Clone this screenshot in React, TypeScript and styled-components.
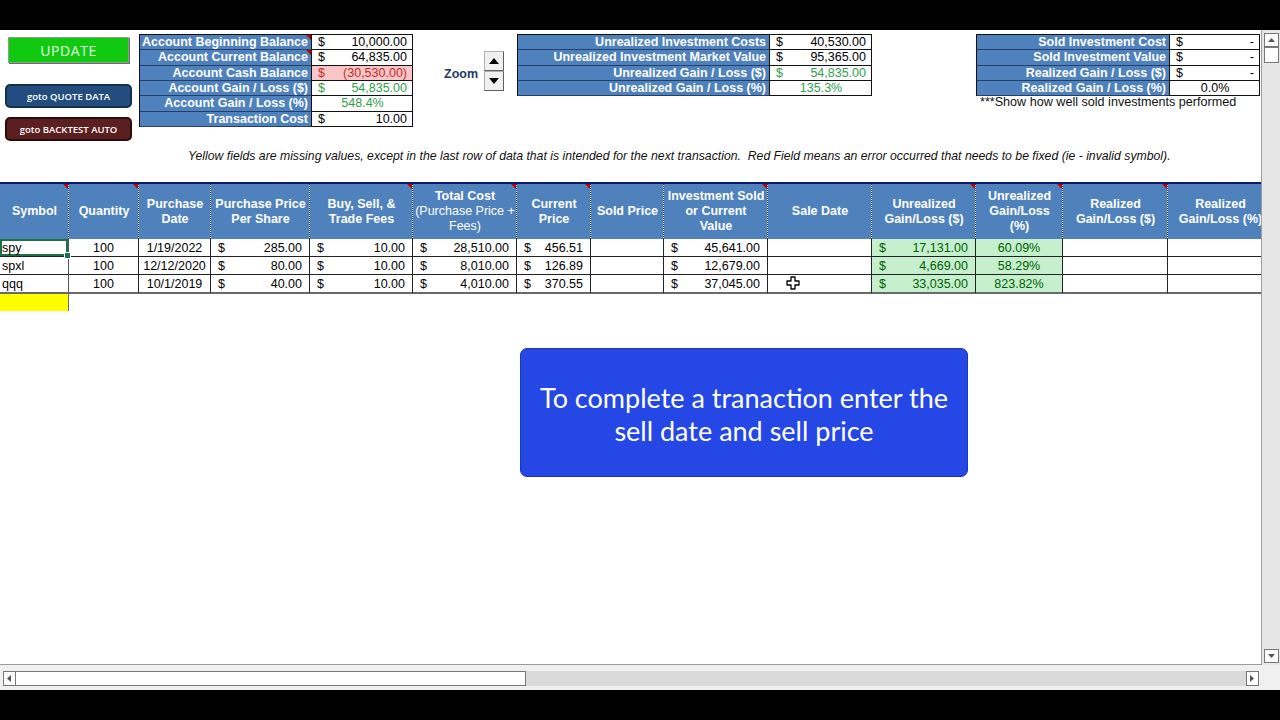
import React from "react";
import styled, { createGlobalStyle } from "styled-components";

const GlobalStyle = createGlobalStyle`
  html, body { margin: 0; padding: 0; background: #000; }
  body {
    width: 1280px;
    height: 720px;
    overflow: hidden;
    font-family: "Liberation Sans", Arial, sans-serif;
  }
  * { box-sizing: border-box; }
`;

// Excel column widths (A..N), px — N runs past the window edge
const COLS = "69px 70px 72px 99px 103px 104px 74px 73px 104px 104px 104px 87px 105px 105px";

const Screen = styled.div`
  width: 1280px;
  height: 720px;
  display: flex;
  flex-direction: column;
  background: #000;
`;

const BlackBar = styled.div<{ $h: number }>`
  height: ${(p) => p.$h}px;
  background: #000;
  flex-shrink: 0;
`;

const Window = styled.div`
  height: 635px;
  display: flex;
  background: #fff;
`;

const Sheet = styled.div`
  position: relative;
  width: 1262px;
  height: 635px;
  overflow: hidden;
  background: #fff;
  border-right: 1px solid #9c9c9c;
  border-bottom: 1px solid #9c9c9c;
  display: flex;
  flex-direction: column;
`;

/* ---------- top area ---------- */

const TopArea = styled.div`
  display: grid;
  grid-template-columns: ${COLS};
  height: 111px;
  padding-top: 4px;
  align-items: start;
`;

const ButtonStack = styled.div`
  grid-column: 1 / 3;
  display: flex;
  flex-direction: column;
  align-items: flex-start;
  padding: 3px 0 0 5px;
`;

const UpdateButton = styled.div`
  margin-left: 3px;
  width: 121px;
  height: 26px;
  background: #12c912;
  border: 1px solid #8aa08a;
  box-shadow: 1px 1px 0 #6b6b6b;
  color: #e4ffe4;
  font-family: "Open Sans", sans-serif;
  font-size: 14px;
  letter-spacing: 0.6px;
  display: flex;
  align-items: center;
  justify-content: center;
`;

const NavButton = styled.div<{ $bg: string; $edge: string; $gap: number }>`
  margin-top: ${(p) => p.$gap}px;
  width: 127px;
  height: 24px;
  border-radius: 5px;
  background: ${(p) => p.$bg};
  border: 2px solid ${(p) => p.$edge};
  color: #fff;
  font-family: "Open Sans", sans-serif;
  font-weight: 600;
  font-size: 9.5px;
  display: flex;
  align-items: center;
  justify-content: center;
`;

const SummaryTable = styled.div<{ $col?: string; $label: number }>`
  grid-column: ${(p) => p.$col || "auto"};
  display: grid;
  grid-template-columns: ${(p) => p.$label}px 1fr;
  border: 1px solid #111;
  border-bottom: none;
`;

const LabelCell = styled.div<{ $flag?: boolean }>`
  position: relative;
  height: 15.33px;
  background: #4f81bd;
  color: #fff;
  font-weight: bold;
  font-size: 12.5px;
  line-height: 14.5px;
  text-align: right;
  padding-right: 3px;
  white-space: nowrap;
  border-bottom: 1px solid #22406a;
  &::after {
    content: "";
    display: ${(p) => (p.$flag ? "block" : "none")};
    position: absolute;
    top: 0;
    right: 0;
    border-top: 5px solid #c00000;
    border-left: 5px solid transparent;
  }
`;

const ValueCell = styled.div<{ $bg?: string; $color?: string; $center?: boolean }>`
  height: 15.33px;
  display: flex;
  justify-content: ${(p) => (p.$center ? "center" : "space-between")};
  align-items: center;
  padding: 0 5px 0 6px;
  background: ${(p) => p.$bg || "#fff"};
  color: ${(p) => p.$color || "#000"};
  font-size: 12.5px;
  border-bottom: 1px solid #111;
  border-left: 1px solid #111;
  white-space: nowrap;
`;

const ZoomControl = styled.div`
  grid-column: 6;
  display: flex;
  align-items: center;
  gap: 6px;
  padding-left: 31px;
  margin-top: 17px;
`;

const ZoomLabel = styled.span`
  font-weight: bold;
  font-size: 12.5px;
  color: #1f3a68;
  padding-top: 5px;
`;

const Spinner = styled.div`
  display: flex;
  flex-direction: column;
`;

const SpinButton = styled.div`
  width: 20px;
  height: 20px;
  background: #f0f0f0;
  border: 1px solid #b0b0b0;
  border-right-color: #606060;
  border-bottom-color: #606060;
  display: flex;
  align-items: center;
  justify-content: center;
`;

const SoldBlock = styled.div`
  grid-column: 12 / 15;
  width: 284px;
`;

const Footnote = styled.div`
  padding-left: 4px;
  font-size: 12.6px;
  line-height: 13px;
  color: #111;
  white-space: nowrap;
`;

const NoteRow = styled.div`
  height: 41px;
  padding: 8px 0 0 188px;
  font-style: italic;
  font-size: 12.25px;
  line-height: 14px;
  color: #111;
  white-space: nowrap;
`;

/* ---------- main table ---------- */

const HeaderRow = styled.div`
  display: grid;
  grid-template-columns: ${COLS};
  height: 57px;
  border-top: 2px solid #0c1a6e;
  background: #4f81bd;
`;

const HeadCell = styled.div<{ $flag?: boolean }>`
  position: relative;
  display: flex;
  flex-direction: column;
  align-items: center;
  justify-content: center;
  text-align: center;
  color: #fff;
  font-weight: bold;
  font-size: 12.5px;
  line-height: 15px;
  white-space: nowrap;
  &::after {
    content: "";
    position: absolute;
    top: 0;
    bottom: 0;
    right: 0;
    width: 1px;
    background: repeating-linear-gradient(#14246a 0 1px, #ffffff 1px 2px);
  }
  &::before {
    content: "";
    display: ${(p) => (p.$flag ? "block" : "none")};
    position: absolute;
    top: 0;
    right: 1px;
    border-top: 5px solid #c00000;
    border-left: 5px solid transparent;
  }
`;

const SubNote = styled.span`
  font-weight: normal;
`;

const DataRow = styled.div<{ $last?: boolean }>`
  display: grid;
  grid-template-columns: ${COLS};
  height: ${(p) => (p.$last ? 19 : 18)}px;
`;

const DataCell = styled.div<{
  $bg?: string;
  $color?: string;
  $align?: string;
  $last?: boolean;
  $active?: boolean;
}>`
  position: relative;
  display: flex;
  align-items: center;
  justify-content: ${(p) => p.$align || "space-between"};
  padding: 0 7px;
  background: ${(p) => p.$bg || "#fff"};
  color: ${(p) => p.$color || "#000"};
  font-size: 12.5px;
  white-space: nowrap;
  border-right: 1px solid #222;
  border-bottom: ${(p) => (p.$last ? "2px solid #6a6a6a" : "1px solid #222")};
  z-index: ${(p) => (p.$active ? 2 : 1)};
  box-shadow: ${(p) => (p.$active ? "inset 0 0 0 2px #1e7145" : "none")};
  &::after {
    content: "";
    display: ${(p) => (p.$active ? "block" : "none")};
    position: absolute;
    right: -3px;
    bottom: -3px;
    width: 5px;
    height: 5px;
    background: #1e7145;
    border: 1px solid #fff;
  }
`;

const SymbolCell = styled(DataCell)`
  padding: 0 2px;
  border-right-color: #555;
`;

const YellowRow = styled.div`
  display: grid;
  grid-template-columns: ${COLS};
  height: 17px;
`;

const YellowCell = styled.div`
  background: #ffff00;
  border-right: 1px solid #6a6a6a;
`;

/* ---------- overlays ---------- */

const Callout = styled.div`
  position: absolute;
  left: 520px;
  top: 318px;
  width: 448px;
  height: 129px;
  background: #2447e6;
  border: 1px solid #1b35b8;
  border-radius: 7px;
  color: #fff;
  font-family: Lato, "Open Sans", sans-serif;
  font-size: 27px;
  line-height: 33px;
  text-align: center;
  display: flex;
  align-items: center;
  justify-content: center;
  padding-top: 2px;
`;

const Cursor = styled.svg`
  position: absolute;
  left: 786px;
  top: 246px;
  z-index: 5;
`;

/* ---------- scrollbars ---------- */

const VScroll = styled.div`
  width: 18px;
  height: 635px;
  background: #e6e6e6;
  display: flex;
  flex-direction: column;
  padding: 3px 1px 2px 2px;
`;

const ScrollBtn = styled.div<{ $w?: number; $h?: number }>`
  width: ${(p) => p.$w || 15}px;
  height: ${(p) => p.$h || 15}px;
  background: #fff;
  border: 1px solid #777;
  display: flex;
  align-items: center;
  justify-content: center;
  flex-shrink: 0;
`;

const VSpacer = styled.div`
  flex: 1;
`;

const HBar = styled.div`
  height: 25px;
  background: #f0f0f0;
  display: flex;
  align-items: center;
  padding: 1px 0 0 3px;
`;

const HThumb = styled.div`
  width: 510px;
  height: 15px;
  background: #fff;
  border: 1px solid #777;
  border-left: none;
`;

const HTrack = styled.div`
  width: 720px;
  height: 15px;
  background: #dadada;
`;

const Arrow = ({ dir }: { dir: "up" | "down" | "left" | "right" }) => {
  const pts = {
    up: "1,6 4.5,2 8,6",
    down: "1,2 4.5,6 8,2",
    left: "6,1 2,4.5 6,8",
    right: "2,1 6,4.5 2,8",
  }[dir];
  return (
    <svg width="9" height="9" viewBox="0 0 9 9">
      <polygon points={pts} fill="#555" />
    </svg>
  );
};

const SpinArrow = ({ up }: { up?: boolean }) => (
  <svg width="12" height="8" viewBox="0 0 12 8">
    <polygon points={up ? "1,7 6,1 11,7" : "1,1 6,7 11,1"} fill="#000" />
  </svg>
);

const Money = ({ v }: { v: string }) => (
  <>
    <span>$</span>
    <span>{v}</span>
  </>
);

const accountRows = [
  { label: "Account Beginning Balance", value: "10,000.00", flag: true },
  { label: "Account Current Balance", value: "64,835.00", flag: true },
  { label: "Account Cash Balance", value: "(30,530.00)", bg: "#f8c6c6", color: "#c42b2b" },
  { label: "Account Gain / Loss ($)", value: "54,835.00", color: "#2fa04c" },
  { label: "Account Gain / Loss (%)", value: "548.4%", color: "#2fa04c", pct: true },
  { label: "Transaction Cost", value: "10.00" },
];

const unrealizedRows = [
  { label: "Unrealized Investment Costs", value: "40,530.00" },
  { label: "Unrealized Investment Market Value", value: "95,365.00" },
  { label: "Unrealized Gain / Loss ($)", value: "54,835.00", color: "#2fa04c" },
  { label: "Unrealized Gain / Loss (%)", value: "135.3%", color: "#2fa04c", pct: true },
];

const soldRows = [
  { label: "Sold Investment Cost", value: "-" },
  { label: "Sold Investment Value", value: "-" },
  { label: "Realized Gain / Loss ($)", value: "-" },
  { label: "Realized Gain / Loss (%)", value: "0.0%", pct: true },
];

type SumRow = { label: string; value: string; flag?: boolean; bg?: string; color?: string; pct?: boolean };

const SummaryRows = ({ rows }: { rows: SumRow[] }) => (
  <>
    {rows.map((r) => (
      <React.Fragment key={r.label}>
        <LabelCell $flag={r.flag}>{r.label}</LabelCell>
        <ValueCell $bg={r.bg} $color={r.color} $center={r.pct}>
          {r.pct ? r.value : <Money v={r.value} />}
        </ValueCell>
      </React.Fragment>
    ))}
  </>
);

const headers: { lines: React.ReactNode; flag?: boolean }[] = [
  { lines: "Symbol", flag: true },
  { lines: "Quantity", flag: true },
  { lines: <>Purchase<br />Date</> },
  { lines: <>Purchase Price<br />Per Share</> },
  { lines: <>Buy, Sell, &amp;<br />Trade Fees</>, flag: true },
  {
    lines: (
      <>
        Total Cost
        <br />
        <SubNote>(Purchase Price +</SubNote>
        <SubNote>Fees)</SubNote>
      </>
    ),
    flag: true,
  },
  { lines: <>Current<br />Price</>, flag: true },
  { lines: "Sold Price" },
  { lines: <>Investment Sold<br />or Current<br />Value</>, flag: true },
  { lines: "Sale Date" },
  { lines: <>Unrealized<br />Gain/Loss ($)</>, flag: true },
  { lines: <>Unrealized<br />Gain/Loss<br />(%)</>, flag: true },
  { lines: <>Realized<br />Gain/Loss ($)</>, flag: true },
  { lines: <>Realized<br />Gain/Loss (%)</> },
];

const trades = [
  { sym: "spy", qty: "100", date: "1/19/2022", price: "285.00", fee: "10.00", total: "28,510.00", cur: "456.51", val: "45,641.00", ug: "17,131.00", up: "60.09%" },
  { sym: "spxl", qty: "100", date: "12/12/2020", price: "80.00", fee: "10.00", total: "8,010.00", cur: "126.89", val: "12,679.00", ug: "4,669.00", up: "58.29%" },
  { sym: "qqq", qty: "100", date: "10/1/2019", price: "40.00", fee: "10.00", total: "4,010.00", cur: "370.55", val: "37,045.00", ug: "33,035.00", up: "823.82%" },
];

const GREEN_BG = "#c6efce";
const GREEN_TX = "#006100";

export default function App() {
  return (
    <Screen>
      <GlobalStyle />
      <BlackBar $h={30} />
      <Window>
        <Sheet>
          <TopArea>
            <ButtonStack>
              <UpdateButton>UPDATE</UpdateButton>
              <NavButton $bg="#224d7e" $edge="#15304f" $gap={21}>goto QUOTE DATA</NavButton>
              <NavButton $bg="#5b1f1f" $edge="#2c0c0c" $gap={9}>goto BACKTEST AUTO</NavButton>
            </ButtonStack>

            <SummaryTable $col="3 / 6" $label={171}>
              <SummaryRows rows={accountRows} />
            </SummaryTable>

            <ZoomControl>
              <ZoomLabel>Zoom</ZoomLabel>
              <Spinner>
                <SpinButton><SpinArrow up /></SpinButton>
                <SpinButton><SpinArrow /></SpinButton>
              </Spinner>
            </ZoomControl>

            <SummaryTable $col="7 / 11" $label={251}>
              <SummaryRows rows={unrealizedRows} />
            </SummaryTable>

            <SoldBlock>
              <SummaryTable $label={192}>
                <SummaryRows rows={soldRows} />
              </SummaryTable>
              <Footnote>***Show how well sold investments performed</Footnote>
            </SoldBlock>
          </TopArea>

          <NoteRow>
            Yellow fields are missing values, except in the last row of data that is intended for the next transaction.&nbsp;&nbsp;Red Field means an error occurred that needs to be fixed (ie - invalid symbol).
          </NoteRow>

          <HeaderRow>
            {headers.map((h, i) => (
              <HeadCell key={i} $flag={h.flag}>{h.lines}</HeadCell>
            ))}
          </HeaderRow>

          {trades.map((t, i) => {
            const last = i === trades.length - 1;
            return (
              <DataRow key={t.sym} $last={last}>
                <SymbolCell $align="flex-start" $last={last} $active={i === 0}>{t.sym}</SymbolCell>
                <DataCell $align="center" $last={last}>{t.qty}</DataCell>
                <DataCell $align="center" $last={last}>{t.date}</DataCell>
                <DataCell $last={last}><Money v={t.price} /></DataCell>
                <DataCell $last={last}><Money v={t.fee} /></DataCell>
                <DataCell $last={last}><Money v={t.total} /></DataCell>
                <DataCell $last={last}><Money v={t.cur} /></DataCell>
                <DataCell $last={last} />
                <DataCell $last={last}><Money v={t.val} /></DataCell>
                <DataCell $last={last} />
                <DataCell $last={last} $bg={GREEN_BG} $color={GREEN_TX}><Money v={t.ug} /></DataCell>
                <DataCell $last={last} $bg={GREEN_BG} $color={GREEN_TX} $align="center">{t.up}</DataCell>
                <DataCell $last={last} />
                <DataCell $last={last} />
              </DataRow>
            );
          })}

          <YellowRow>
            <YellowCell />
          </YellowRow>

          <Cursor width="14" height="14" viewBox="0 0 14 14">
            <path
              d="M5 1h4v4h4v4h-4v4h-4v-4h-4v-4h4z"
              fill="#fff"
              stroke="#000"
              strokeWidth="1.3"
              strokeLinejoin="round"
            />
          </Cursor>

          <Callout>
            To complete a tranaction enter the
            <br />
            sell date and sell price
          </Callout>
        </Sheet>

        <VScroll>
          <ScrollBtn $h={14}><Arrow dir="up" /></ScrollBtn>
          <ScrollBtn $h={16} />
          <VSpacer />
          <ScrollBtn $h={14}><Arrow dir="down" /></ScrollBtn>
        </VScroll>
      </Window>

      <HBar>
        <ScrollBtn $w={13}><Arrow dir="left" /></ScrollBtn>
        <HThumb />
        <HTrack />
        <ScrollBtn $w={13}><Arrow dir="right" /></ScrollBtn>
      </HBar>
      <BlackBar $h={30} />
    </Screen>
  );
}
